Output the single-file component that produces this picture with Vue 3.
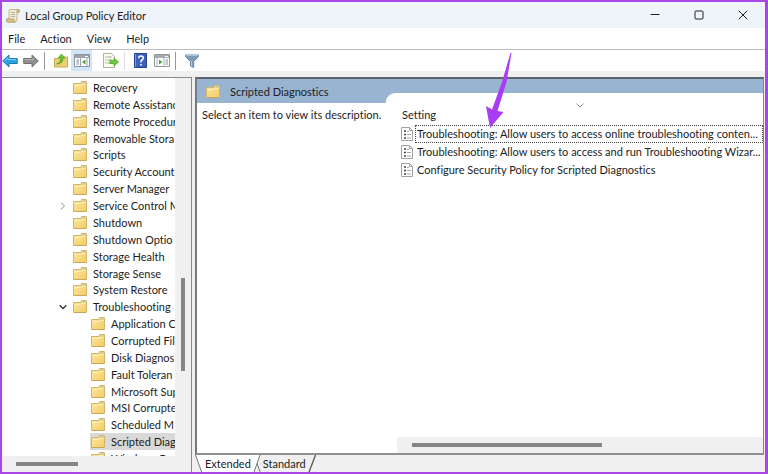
<script setup>
import { ref } from 'vue'

const menus = ['File', 'Action', 'View', 'Help']

const nodes = [
  { name: 'Recovery' },
  { name: 'Remote Assistanc' },
  { name: 'Remote Procedur' },
  { name: 'Removable Stora' },
  { name: 'Scripts' },
  { name: 'Security Account' },
  { name: 'Server Manager' },
  { name: 'Service Control M', state: 'closed' },
  { name: 'Shutdown' },
  { name: 'Shutdown Optio' },
  { name: 'Storage Health' },
  { name: 'Storage Sense' },
  { name: 'System Restore' },
  { name: 'Troubleshooting', state: 'open' },
  { name: 'Application C', child: true },
  { name: 'Corrupted Fil', child: true },
  { name: 'Disk Diagnos', child: true },
  { name: 'Fault Toleran', child: true },
  { name: 'Microsoft Sup', child: true },
  { name: 'MSI Corrupte', child: true },
  { name: 'Scheduled M', child: true },
  { name: 'Scripted Diag', child: true },
  { name: 'Windows Bo', child: true },
]

const settings = [
  'Troubleshooting: Allow users to access online troubleshooting conten...',
  'Troubleshooting: Allow users to access and run Troubleshooting Wizar...',
  'Configure Security Policy for Scripted Diagnostics',
]

const selectedNode = ref('Scripted Diag')
const focused = ref(0)
</script>

<template>
  <div class="window">
    <svg class="defs" width="0" height="0" aria-hidden="true">
      <defs>
        <linearGradient id="folderFill" x1="0" y1="0" x2="1" y2="1">
          <stop offset="0" stop-color="#fde9a4" />
          <stop offset="1" stop-color="#f3cb62" />
        </linearGradient>
        <symbol id="folder" viewBox="0 0 14 13">
          <path d="M.5 2.500h7.500l.5-2h4.500q.5 0 .5.5v11.500H.5z" fill="url(#folderFill)" stroke="#d2b56c" />
          <path d="M9.500 2h3" stroke="#9fc0bd" />
          <path d="M1.500 4.500h6l1.500-1h3.500" fill="none" stroke="#fff0b8" />
          <path d="M1 12.500h12" stroke="#c9a65a" />
        </symbol>
      </defs>
    </svg>

    <header class="titlebar">
      <svg class="app-icon" viewBox="0 0 14 15" width="14" height="15">
        <path d="M4 1.500h8q1.500 0 1.500 1.500t-1.500 1.500H11V11q0 3-2 3H2Q.5 14 .5 12.500V11H3V3Q3 1.500 4 1.500z" fill="#f3ead0" stroke="#c9b78c" />
        <path d="M11 4.500V3q0-1.500 1.300-1.500T13.500 3 12 4.500zM.500 11H8v1.500q0 1.500 1.200 1.500H2Q.500 14 .500 12.500z" fill="#dcc794" stroke="#b9a26e" />
        <path d="M5 4.500h4M5 6.500h4M5 8.500h4" stroke="#b8b19c" />
      </svg>
      <h1>Local Group Policy Editor</h1>
      <div class="controls">
        <button aria-label="Minimize"><svg viewBox="0 0 10 10" width="10" height="10"><path d="M.5 4.500h9" /></svg></button>
        <button aria-label="Maximize"><svg viewBox="0 0 10 10" width="10" height="10"><rect x="1" y="1" width="8" height="8" rx="1" /></svg></button>
        <button aria-label="Close"><svg viewBox="0 0 10 10" width="10" height="10"><path d="M.7.7l8.600 8.600M9.300.7L.7 9.300" /></svg></button>
      </div>
    </header>

    <nav class="menubar">
      <button v-for="m in menus" :key="m">{{ m }}</button>
    </nav>

    <div class="toolbar">
      <button aria-label="Back">
        <svg viewBox="0 0 16 14" width="16" height="14"><path d="M.7 7L7 1v3.500h8.300v5H7V13z" fill="#2ea3e4" stroke="#1b7cba" /><path d="M3 6.500L6 4v1.500h8" fill="none" stroke="#7fd0f7" /></svg>
      </button>
      <button aria-label="Forward">
        <svg viewBox="0 0 16 14" width="16" height="14"><path d="M15.300 7L9 1v3.500H.7v5H9V13z" fill="#909090" stroke="#707070" /><path d="M1.500 5.500H10V4" fill="none" stroke="#b5b5b5" /></svg>
      </button>
      <span class="sep"></span>
      <button aria-label="Up one level">
        <svg viewBox="0 0 14 15" width="14" height="15"><path d="M.5 5.500H5L6.500 4h7v10H.5z" fill="#edcf72" stroke="#c9ab5c" /><path d="M2.500 11q4.500-1.500 4-6H4L7.500 1 11 5H9q.3 6-6.500 6z" fill="#6cc02f" stroke="#4a9a20" stroke-width=".6" /></svg>
      </button>
      <button class="pressed" aria-label="Show or hide console tree">
        <svg viewBox="0 0 16 13" width="16" height="13"><path d="M.5.5h15v12H.5z" fill="#fff" stroke="#8d949b" /><path d="M1 1h14v3H1z" fill="#9aa4ae" /><path d="M11 2.500h3" stroke="#fff" /><path d="M2.500 6h2.500M2.500 8h2.500M2.500 10h2.500" stroke="#74879a" /><path d="M6.500 4v8.500M13 4v8.500" stroke="#9aa4ae" /><path d="M11.500 5.500v5L8 8z" fill="#48a52f" /></svg>
      </button>
      <button aria-label="Export list">
        <svg viewBox="0 0 16 15" width="16" height="15"><path d="M.5.5h8l3 3v11H.5z" fill="#fdfbef" stroke="#b4af9b" /><path d="M2.500 4h1M2.500 7h1M2.500 10h1" stroke="#4b7b3d" /><path d="M4.500 4h4M4.500 7h4M4.500 10h4" stroke="#999" /><path d="M7 7.500h4V5l4.500 4L11 13v-2.500H7z" fill="#6dcb3c" stroke="#45a022" stroke-width=".7" /></svg>
      </button>
      <span class="sep light"></span>
      <button aria-label="Help">
        <svg viewBox="0 0 13 15" width="13" height="15"><path d="M.5.5h12v14H.5z" fill="#3c62c0" stroke="#24418e" /><path d="M1.500 1v13" stroke="#7d9ae0" /><path d="M4.700 5.200q0-2.200 2.300-2.200t2.300 2q0 1.200-1.300 2T7 9.500" fill="none" stroke="#fff" stroke-width="1.500" /><path d="M6.200 11h1.600v1.500H6.200z" fill="#fff" /></svg>
      </button>
      <button aria-label="Show or hide action pane">
        <svg viewBox="0 0 16 13" width="16" height="13"><path d="M.5.5h15v12H.5z" fill="#fff" stroke="#92979b" /><path d="M1 1h14v3H1z" fill="#a5abb0" /><path d="M11 2.500h3" stroke="#fff" /><path d="M11.500 6H14M11.500 8H14M11.500 10H14" stroke="#7f8c98" /><path d="M10 4v8.500M3 4v8.500" stroke="#a9b0b6" /><path d="M5 5.500v5L8.500 8z" fill="#48a52f" /></svg>
      </button>
      <span class="sep"></span>
      <button aria-label="Filter">
        <svg viewBox="0 0 14 14" width="14" height="14"><path d="M.5 1h13v1.500L8.700 7.500V13.500L5.500 12V7.500L.5 2.500z" fill="#7f9db6" stroke="#6a8aa3" /><path d="M1 1.500h12" stroke="#a9c3d8" /><path d="M6.500 7v5" stroke="#b8cfe0" /></svg>
      </button>
    </div>

    <main class="body">
      <aside class="tree-pane">
        <div class="tree-view">
          <ul class="tree">
            <li v-for="n in nodes" :key="n.name" :class="{ child: n.child, selected: n.name === selectedNode }" @click="selectedNode = n.name">
              <span class="twist">
                <svg v-if="n.state === 'closed'" viewBox="0 0 8 8" width="8" height="8"><path d="M2 .5L5.500 4 2 7.500" fill="none" stroke="#8a8a8a" /></svg>
                <svg v-if="n.state === 'open'" viewBox="0 0 8 8" width="8" height="8"><path d="M.7 2.200L4 5.500l3.300-3.300" fill="none" stroke="#333" stroke-width="1.300" /></svg>
              </span>
              <span class="node"><svg class="folder" width="14" height="13"><use href="#folder" /></svg>{{ n.name }}</span>
            </li>
          </ul>
        </div>
        <div class="vscroll"><span></span></div>
        <div class="hscroll"><span></span></div>
      </aside>

      <section class="result">
        <div class="pane">
          <div class="band"><svg class="folder" width="14" height="13"><use href="#folder" /></svg><h2>Scripted Diagnostics</h2></div>
          <p class="description">Select an item to view its description.</p>
          <div class="list">
            <svg class="sort" viewBox="0 0 8 5" width="8" height="5"><path d="M.5.7L4 4 7.500.7" fill="none" stroke="#888" /></svg>
            <table>
              <thead><tr><th scope="col">Setting</th></tr></thead>
              <tbody>
                <tr v-for="(s, i) in settings" :key="s" @click="focused = i">
                  <td>
                    <div class="entry">
                      <svg viewBox="0 0 12 14" width="12" height="14"><path d="M.5.5h8l3 3v10H.5z" fill="#fff" stroke="#a2a2a2" /><path d="M8.500.5v3h3" fill="none" stroke="#a2a2a2" /><path d="M3 4h2M3 7.500h2M3 11h2" stroke="#444" stroke-width="1.600" /><path d="M6 4.500h2M6 7.500h4M6 11h4" stroke="#a5a5a5" /></svg>
                      <span :class="{ focused: focused === i }">{{ s }}</span>
                    </div>
                  </td>
                </tr>
              </tbody>
            </table>
            <div class="list-scroll"><span></span></div>
          </div>
        </div>
        <div class="tabs">
          <svg class="edge" viewBox="0 0 8 18" width="8" height="18"><path d="M0 0h8v18H7z" fill="#fff" /><path d="M.5 0l6.500 18" stroke="#777" /></svg>
          <button class="active">Extended</button>
          <svg class="edge" viewBox="0 0 8 18" width="8" height="18"><path d="M0 0h7L1 18H0z" fill="#fff" /><path d="M7 0L.7 18M4 8.500L7.500 18" fill="none" stroke="#777" /></svg>
          <button>Standard</button>
          <svg class="edge" viewBox="0 0 8 18" width="8" height="18"><path d="M7.500 0L.7 18" stroke="#555" stroke-width="1.300" /></svg>
        </div>
      </section>
    </main>

    <svg class="pointer" viewBox="0 0 30 76" width="30" height="76" aria-hidden="true">
      <path d="M26.500 0h1L22.500 29 13.500 58l6 1L6 75 2 53l6 3.500L18 29z" fill="#a93df5" />
    </svg>
  </div>
</template>

<style>
body {
  margin: 0;
}
</style>

<style scoped>
.window {
  position: relative;
  box-sizing: border-box;
  height: 100vh;
  display: flex;
  flex-direction: column;
  overflow: hidden;
  border: 2px solid #a846e6;
  border-right-width: 3px;
  background: #f0f0f0;
  color: #1c1c1c;
  font: 11px/17px Lato, "Open Sans", sans-serif;
  font-variant-ligatures: none;
}
.defs {
  position: absolute;
}
button {
  margin: 0;
  padding: 0;
  border: 0;
  background: none;
  color: inherit;
  font: inherit;
  font-variant-ligatures: none;
}
svg {
  display: block;
  flex: none;
}
h1, h2, p, ul {
  margin: 0;
  padding: 0;
  font-size: inherit;
  font-weight: 400;
}
.titlebar {
  flex: none;
  display: flex;
  align-items: center;
  height: 26px;
  padding-left: 4px;
  gap: 5px;
  background: #eff3fa;
}
.controls {
  display: flex;
  margin-left: auto;
}
.controls button {
  display: grid;
  place-items: center;
  width: 44px;
  height: 24px;
}
.controls svg {
  fill: none;
  stroke: #222;
}
.menubar {
  flex: none;
  display: flex;
  gap: 15px;
  height: 21px;
  padding-left: 6px;
  background: #fff;
  border-bottom: 1px solid #bdbdbd;
}
.toolbar {
  flex: none;
  display: flex;
  align-items: center;
  height: 21px;
  margin-left: -3px;
  background: #fff;
}
.toolbar button {
  display: grid;
  place-items: center;
  width: 21px;
  height: 21px;
}
.toolbar .pressed {
  margin-right: 8px;
  background: #cfe6f8;
}
.sep {
  width: 1px;
  height: 18px;
  margin: 0 5px 0 3px;
  background: #999;
}
.sep.light {
  background: #ddd;
}
.body {
  flex: 1;
  min-height: 0;
  display: grid;
  grid-template-columns: 190px minmax(0, 1fr);
  column-gap: 3px;
  padding-top: 6px;
}
.tree-pane {
  min-height: 0;
  display: grid;
  grid-template: minmax(0, 1fr) 16px / minmax(0, 1fr) 16px;
  border-top: 1px solid #868a90;
  border-right: 1px solid #868a90;
}
.tree-view {
  overflow: hidden;
  background: #fff;
}
.tree {
  display: grid;
  grid-auto-rows: 1fr;
  height: calc(100% + 10px);
  margin-top: 1px;
  list-style: none;
}
.tree li {
  display: flex;
  align-items: center;
  min-height: 0;
  padding-left: 57px;
  white-space: nowrap;
}
.tree .child {
  padding-left: 75px;
}
.twist {
  width: 13px;
}
.node {
  flex: 1;
  display: flex;
  align-items: center;
  gap: 6px;
  padding-left: 1px;
}
.selected .node {
  background: #d9d9d9;
}
.vscroll {
  display: flex;
  flex-direction: column;
  align-items: center;
}
.vscroll::before {
  content: "";
  flex: 200;
}
.vscroll::after {
  content: "";
  flex: 85;
}
.vscroll span {
  flex: 93;
  width: 4px;
  background: #858585;
}
.hscroll {
  display: flex;
  align-items: center;
  padding-left: 14px;
}
.hscroll span {
  width: 62px;
  height: 4px;
  background: #858585;
}
.result {
  min-height: 0;
  display: flex;
  flex-direction: column;
  padding-right: 1px;
}
.pane {
  flex: 1;
  min-height: 0;
  display: grid;
  grid-template: 14px 10px minmax(0, 1fr) / 189px minmax(0, 1fr);
  border: 1px solid #82868c;
  border-top: 2px solid #5d646d;
  border-left: 2px solid #777b81;
  border-bottom: 2px solid #909090;
  background: #fff;
}
.band {
  grid-area: 1 / 1 / 3 / 3;
  display: flex;
  align-items: center;
  gap: 10px;
  padding-left: 9px;
  background: #99b4d1;
}
.description {
  grid-area: 3 / 1;
  padding: 3px 0 0 5px;
  white-space: nowrap;
}
.list {
  grid-area: 2 / 2 / 4 / 3;
  display: flex;
  flex-direction: column;
  padding-left: 11px;
  border-radius: 9px 0 0 0;
  background: #fff;
}
.sort {
  align-self: center;
  margin-top: 10px;
}
table {
  width: 100%;
  table-layout: fixed;
  border-collapse: collapse;
}
th, td {
  padding: 0;
  font-weight: 400;
  text-align: left;
}
th {
  padding: 0 0 3px 5px;
  line-height: 14px;
}
.entry {
  display: flex;
  align-items: center;
  gap: 2px;
  height: 18px;
  padding-left: 4px;
}
.entry span {
  flex: 1;
  min-width: 0;
  padding-left: 1px;
  border: 1px solid transparent;
  line-height: 16px;
  white-space: nowrap;
}
.entry .focused {
  border: 1px dotted #444;
}
.list-scroll {
  display: flex;
  align-items: center;
  height: 16px;
  margin-top: auto;
  padding-left: 15px;
  background: #f0f0f0;
}
.list-scroll span {
  width: 54%;
  height: 4px;
  background: #858585;
}
.tabs {
  flex: none;
  display: flex;
  height: 17px;
}
.tabs button {
  padding: 0 2px;
}
.tabs .active {
  background: #fff;
}
.pointer {
  position: absolute;
  left: 482px;
  top: 51px;
}
</style>
